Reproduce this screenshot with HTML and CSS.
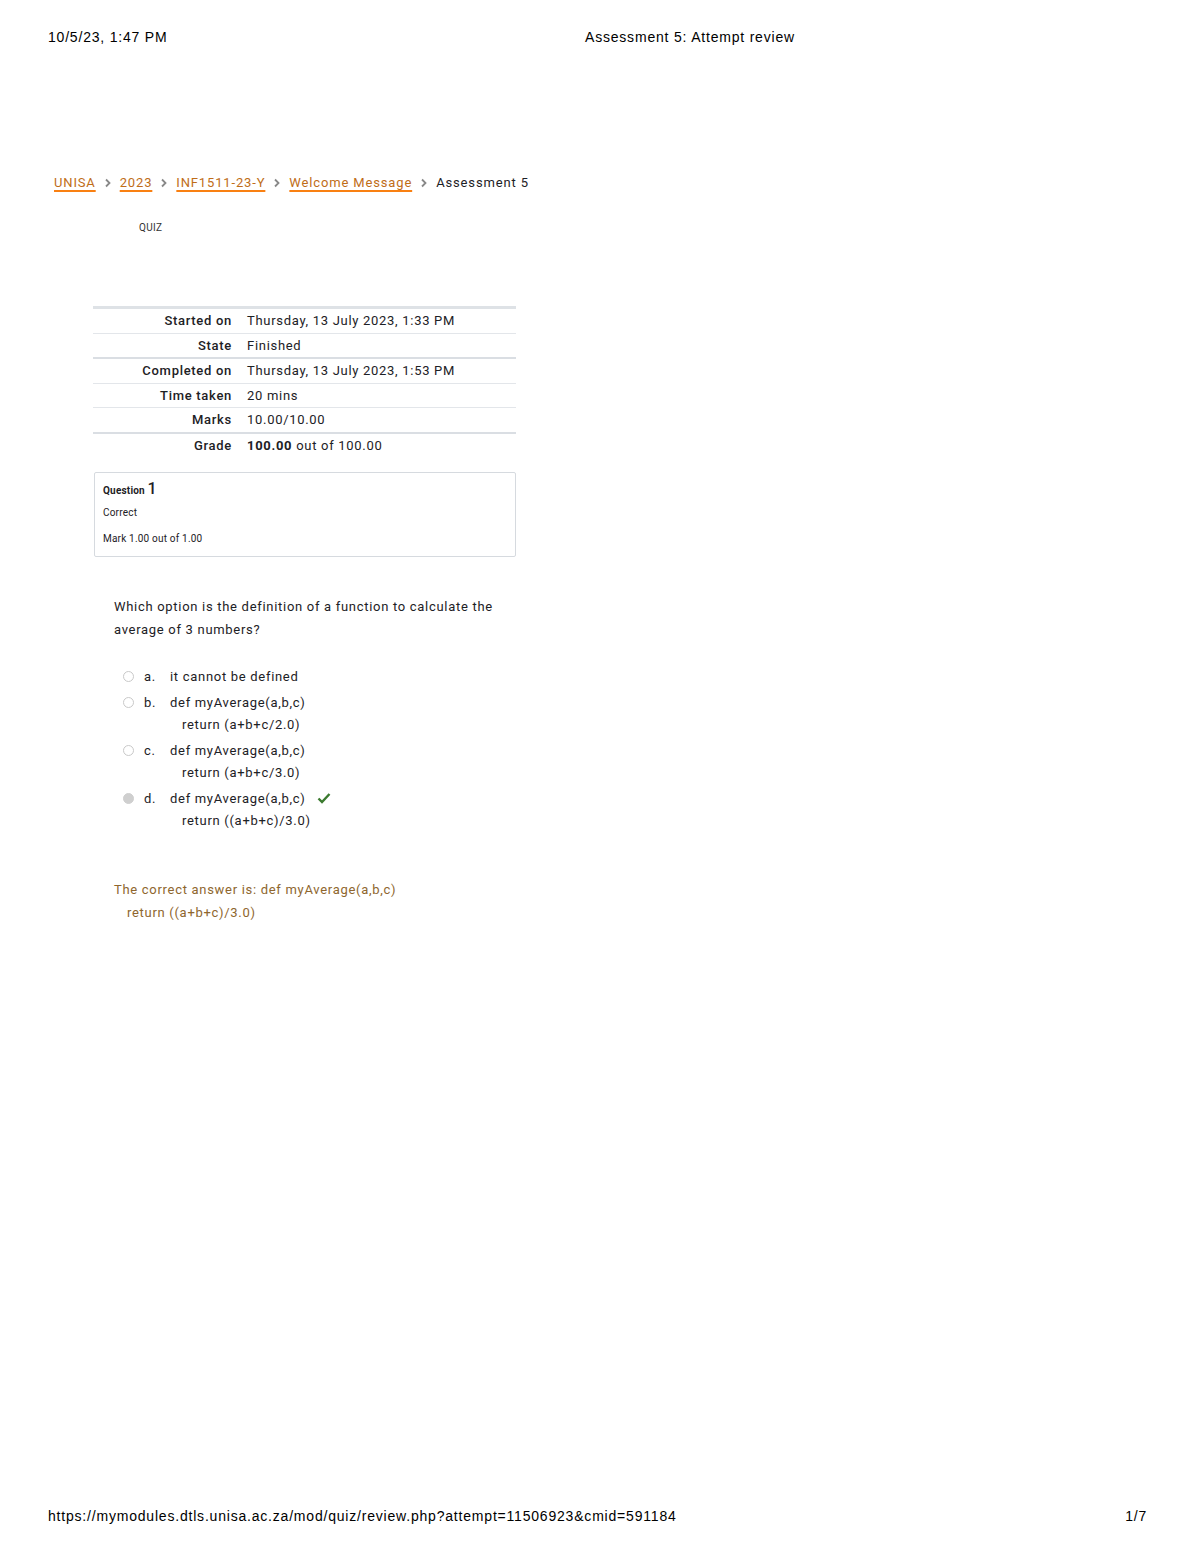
FILE: index.html
```html
<!DOCTYPE html>
<html>
<head>
<meta charset="utf-8">
<title>Assessment 5: Attempt review</title>
<link rel="stylesheet" href="styles.css">
</head>
<body>
<div class="page">
  <header class="print-head">
    <span class="ph-date">10/5/23, 1:47 PM</span>
    <span class="ph-title">Assessment 5: Attempt review</span>
  </header>

  <main class="content">
    <nav class="crumbs">
      <a href="#">UNISA</a><span class="chev"><svg width="8" height="10" viewBox="0 0 8 10"><path d="M2 1.5 L5.5 5 L2 8.5" fill="none" stroke="#888" stroke-width="1.8"/></svg></span>
      <a href="#">2023</a><span class="chev"><svg width="8" height="10" viewBox="0 0 8 10"><path d="M2 1.5 L5.5 5 L2 8.5" fill="none" stroke="#888" stroke-width="1.8"/></svg></span>
      <a href="#">INF1511-23-Y</a><span class="chev"><svg width="8" height="10" viewBox="0 0 8 10"><path d="M2 1.5 L5.5 5 L2 8.5" fill="none" stroke="#888" stroke-width="1.8"/></svg></span>
      <a href="#">Welcome Message</a><span class="chev"><svg width="8" height="10" viewBox="0 0 8 10"><path d="M2 1.5 L5.5 5 L2 8.5" fill="none" stroke="#888" stroke-width="1.8"/></svg></span>
      <span class="current">Assessment 5</span>
    </nav>

    <div class="quiz-label">QUIZ</div>

    <table class="summary">
      <tr><th>Started on</th><td>Thursday, 13 July 2023, 1:33 PM</td></tr>
      <tr class="thick"><th>State</th><td>Finished</td></tr>
      <tr><th>Completed on</th><td>Thursday, 13 July 2023, 1:53 PM</td></tr>
      <tr><th>Time taken</th><td>20 mins</td></tr>
      <tr class="thick"><th>Marks</th><td>10.00/10.00</td></tr>
      <tr class="last"><th>Grade</th><td><b>100.00</b> out of 100.00</td></tr>
    </table>

    <div class="qinfo">
      <div class="qno">Question <span class="qnum">1</span></div>
      <div class="qstate">Correct</div>
      <div class="qgrade">Mark 1.00 out of 1.00</div>
    </div>

    <div class="qtext">Which option is the definition of a function to calculate the average of 3 numbers?</div>

    <div class="answers">
      <div class="opt">
        <span class="radio"></span><span class="letter">a.</span>
        <div class="otext"><div>it cannot be defined</div></div>
      </div>
      <div class="opt">
        <span class="radio"></span><span class="letter">b.</span>
        <div class="otext"><div>def myAverage(a,b,c)</div><div class="ind">return (a+b+c/2.0)</div></div>
      </div>
      <div class="opt">
        <span class="radio"></span><span class="letter">c.</span>
        <div class="otext"><div>def myAverage(a,b,c)</div><div class="ind">return (a+b+c/3.0)</div></div>
      </div>
      <div class="opt">
        <span class="radio checked"></span><span class="letter">d.</span>
        <div class="otext"><div>def myAverage(a,b,c) <svg class="tick" width="14" height="12" viewBox="0 0 14 12"><path d="M1.5 6.5 L5 10 L12.5 2" fill="none" stroke="#3b7a2f" stroke-width="2.4"/></svg></div><div class="ind">return ((a+b+c)/3.0)</div></div>
      </div>
    </div>

    <div class="rightanswer">
      <div>The correct answer is: def myAverage(a,b,c)</div>
      <div class="ind2">return ((a+b+c)/3.0)</div>
    </div>
  </main>

  <footer class="print-foot">
    <span>https://mymodules.dtls.unisa.ac.za/mod/quiz/review.php?attempt=11506923&amp;cmid=591184</span>
    <span>1/7</span>
  </footer>
</div>
</body>
</html>
```

FILE: styles.css
```css
html, body {
  margin: 0;
  padding: 0;
  background: #fff;
}
.page {
  width: 1200px;
  height: 1553px;
  display: flex;
  flex-direction: column;
  font-family: Roboto, "Noto Sans", sans-serif;
  color: #1d2125;
  letter-spacing: 0.7px;
}
.print-head {
  display: flex;
  padding: 28px 0 0 48px;
  height: 20px;
  font-family: "Liberation Sans", Arial, sans-serif;
  font-size: 14px;
  color: #000;
  line-height: 18px;
  letter-spacing: 0.8px;
}
.ph-date { width: 537px; }
.content {
  flex: 1;
  padding-left: 54px;
}
.crumbs {
  margin-top: 126px;
  font-size: 13px;
  line-height: 18px;
  display: flex;
  align-items: center;
  letter-spacing: 0.85px;
}
.crumbs a {
  color: #c06d18;
  text-decoration: underline;
  text-decoration-color: #f98012;
  text-decoration-thickness: 2px;
  text-underline-offset: 3px;
}
.chev {
  display: inline-flex;
  width: 24px;
  justify-content: center;
}
.current { color: #1d2125; }
.quiz-label {
  margin: 30px 0 0 85px;
  font-size: 10px;
  line-height: 12px;
  color: #333;
  letter-spacing: 0.3px;
}
.summary {
  margin: 72px 0 0 39px;
  width: 423px;
  border-collapse: collapse;
  font-size: 13px;
  border-top: 3px solid #dee2e6;
}
.summary tr { border-bottom: 1.5px solid #e3e6ea; }
.summary tr.thick { border-bottom: 2px solid #dadee3; }
.summary tr.last { border-bottom: none; }
.summary th {
  width: 139px;
  text-align: right;
  font-weight: 500;
  padding: 3px 0 3.5px 0;
  line-height: 17px;
}
.summary td {
  padding: 3px 0 3.5px 15px;
  line-height: 17px;
}
.qinfo {
  margin: 15px 0 0 40px;
  width: 404px;
  height: 67px;
  border: 1.5px solid #d6dadf;
  border-radius: 2px;
  padding: 8px 8px 8px 8px;
  letter-spacing: 0.2px;
}
.qno {
  font-size: 10px;
  font-weight: 700;
  line-height: 16px;
}
.qnum {
  font-size: 16px;
  font-weight: 500;
}
.qstate {
  margin-top: 8px;
  font-size: 10px;
  line-height: 12px;
}
.qgrade {
  margin-top: 14px;
  font-size: 10px;
  line-height: 12px;
}
.qtext {
  margin: 38px 0 0 60px;
  width: 390px;
  font-size: 13px;
  line-height: 23px;
}
.answers {
  margin: 25px 0 0 69px;
  font-size: 13px;
  line-height: 22px;
}
.opt {
  display: flex;
  align-items: flex-start;
  margin-bottom: 4px;
}
.radio {
  width: 11px;
  height: 11px;
  border: 1px solid #c9c9c9;
  border-radius: 50%;
  margin-top: 5px;
  box-sizing: border-box;
  flex: none;
}
.radio.checked {
  background: #cfcfcf;
  border-color: #cfcfcf;
}
.letter {
  width: 26px;
  padding-left: 10px;
  flex: none;
}
.ind { padding-left: 12px; }
.tick { margin-left: 8px; vertical-align: -1px; }
.rightanswer {
  margin: 46px 0 0 60px;
  font-size: 13px;
  line-height: 23px;
  color: #8e662e;
}
.ind2 { padding-left: 13px; }
.print-foot {
  display: flex;
  justify-content: space-between;
  padding: 0 53px 28px 48px;
  font-family: "Liberation Sans", Arial, sans-serif;
  font-size: 14px;
  line-height: 18px;
  color: #000;
  letter-spacing: 0.8px;
}
```
